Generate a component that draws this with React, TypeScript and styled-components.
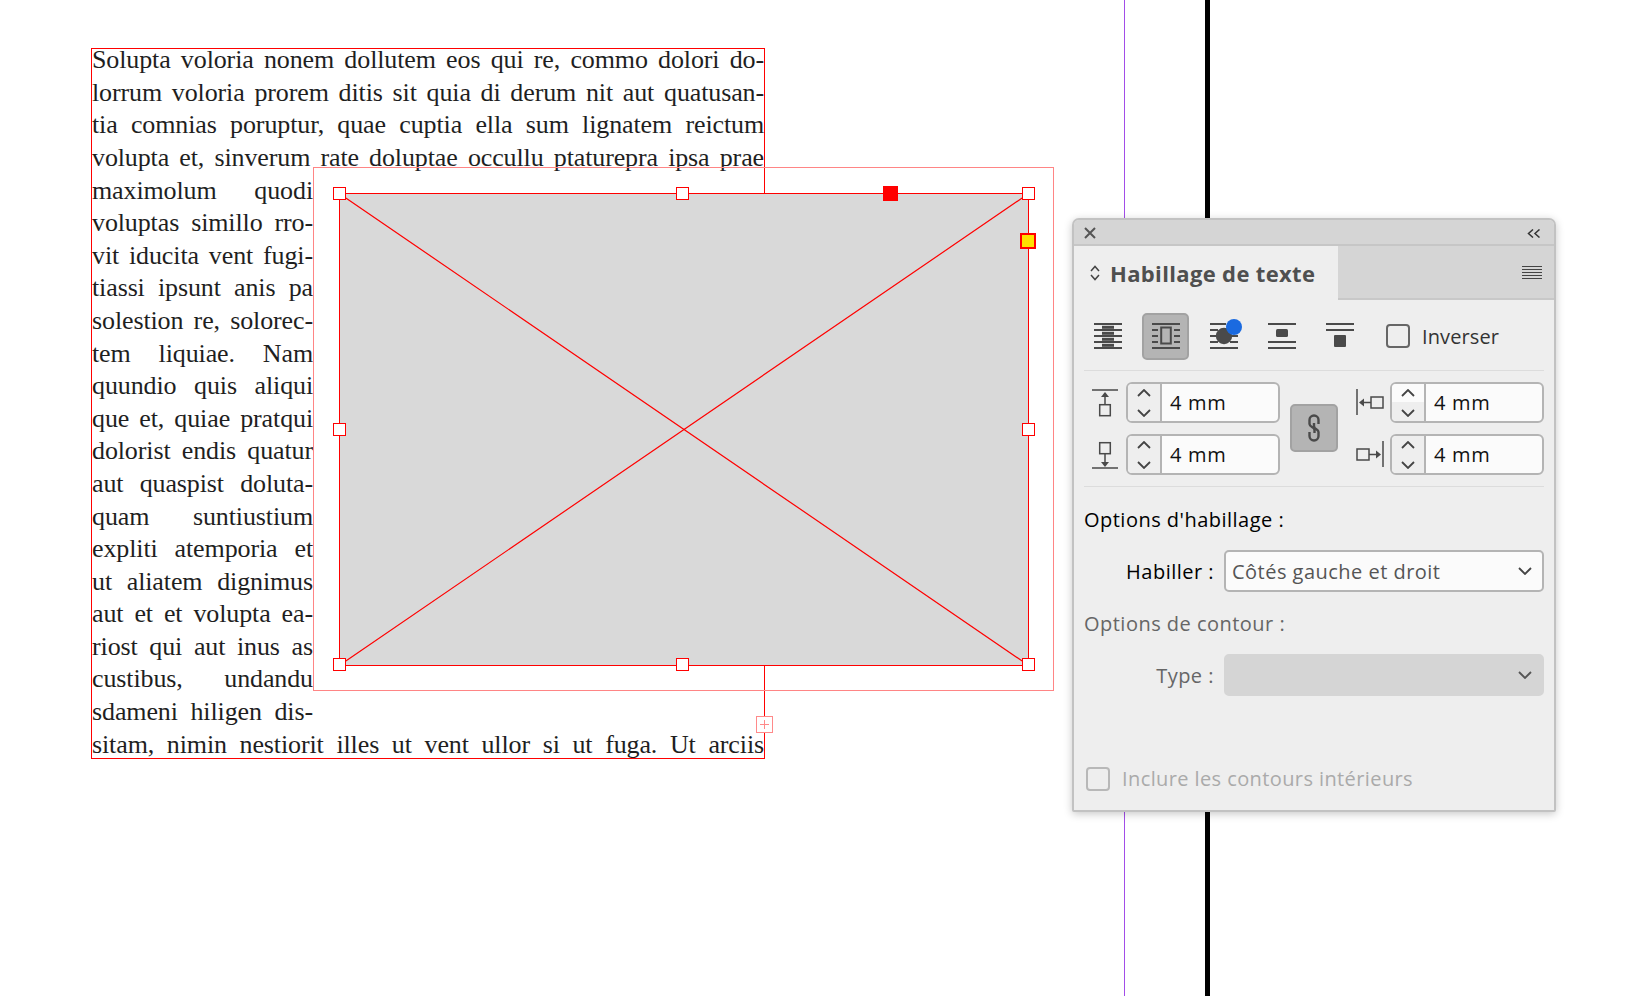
import React from 'react';
import styled, { createGlobalStyle } from 'styled-components';

const Global = createGlobalStyle`
  html, body { margin: 0; padding: 0; background: #fff; }
  #root { width: 1646px; height: 996px; overflow: hidden; }
`;

const Canvas = styled.div`
  position: relative;
  width: 1646px;
  height: 996px;
  background: #fff;
  overflow: hidden;
`;
const Guide = styled.div<{ $x: number; $w: number; $c: string }>`
  position: absolute;
  top: 0;
  bottom: 0;
  left: ${p => p.$x}px;
  width: ${p => p.$w}px;
  background: ${p => p.$c};
`;
const TextFrame = styled.div`
  position: absolute;
  left: 91px;
  top: 48px;
  width: 674px;
  height: 711px;
  box-sizing: border-box;
  border: 1px solid #ff0000;
`;
const TextFlow = styled.div`
  margin-top: -4.8px;
  font-family: 'Liberation Serif', serif;
  font-size: 26px;
  line-height: 32.6px;
  color: #1f1f1f;
  letter-spacing: -0.12px;
`;
const Line = styled.div<{ $short?: boolean }>`
  width: ${p => (p.$short ? 221 : 672)}px;
  height: 32.6px;
  text-align: justify;
  text-align-last: justify;
`;
const OutOfPort = styled.div`
  position: absolute;
  left: 756px;
  top: 716px;
  width: 17px;
  height: 17px;
  box-sizing: border-box;
  border: 1px solid #ff8a8a;
  background: #fff;
  display: flex;
  align-items: center;
  justify-content: center;
`;
const WrapBox = styled.div`
  position: absolute;
  left: 313px;
  top: 167px;
  width: 741px;
  height: 524px;
  box-sizing: border-box;
  border: 1px solid #ff8585;
`;
const ImageFrame = styled.div`
  position: absolute;
  left: 339px;
  top: 193px;
  width: 690px;
  height: 473px;
  box-sizing: border-box;
  border: 1px solid #ff0000;
  background: #d9d9d9;
`;
const Cross = styled.svg`
  display: block;
  width: 100%;
  height: 100%;
`;
const Handle = styled.div<{ $l: number; $t: number }>`
  position: absolute;
  left: ${p => p.$l}%;
  top: ${p => p.$t}%;
  width: 13px;
  height: 13px;
  margin: -7px 0 0 -7px;
  box-sizing: border-box;
  border: 1px solid #ff0000;
  background: #fff;
`;
const RedHandle = styled.div`
  position: absolute;
  left: 543px;
  top: -8px;
  width: 15px;
  height: 15px;
  background: #ff0000;
`;
const YellowHandle = styled.div`
  position: absolute;
  left: 680px;
  top: 39px;
  width: 16px;
  height: 16px;
  box-sizing: border-box;
  border: 2px solid #ff0000;
  background: #ffe100;
`;

const Panel = styled.div`
  position: absolute;
  left: 1072px;
  top: 218px;
  width: 484px;
  height: 594px;
  box-sizing: border-box;
  border: 2px solid #c2c2c2;
  border-radius: 7px 7px 2px 2px;
  background: #eeeeee;
  box-shadow: 0 2px 9px rgba(0, 0, 0, 0.22);
  font-family: 'Open Sans', sans-serif;
  font-size: 20px;
  letter-spacing: 0.48px;
  display: flex;
  flex-direction: column;
`;
const TitleBar = styled.div`
  height: 26px;
  box-sizing: border-box;
  background: #d5d5d5;
  border-bottom: 2px solid #c6c6c6;
  border-radius: 5px 5px 0 0;
  display: flex;
  align-items: center;
  justify-content: space-between;
  padding: 2px 13px 0 10px;
  flex: none;
`;
const TabRow = styled.div`
  height: 54px;
  display: flex;
  background: #d5d5d5;
  flex: none;
`;
const Tab = styled.div`
  width: 264px;
  background: #eeeeee;
  display: flex;
  align-items: center;
  padding-left: 16px;
  box-sizing: border-box;
  gap: 10px;
`;
const TabTitle = styled.span`
  font-size: 22px;
  font-weight: 700;
  color: #4f4f4f;
  letter-spacing: 0.35px;
  line-height: 30px;
`;
const TabRest = styled.div`
  flex: 1;
  border-bottom: 2px solid #c8c8c8;
  display: flex;
  align-items: center;
  justify-content: flex-end;
  padding: 0 12px 0 0;
`;
const WrapTools = styled.div`
  height: 70px;
  box-sizing: border-box;
  padding: 2px 0 0 10px;
  flex: none;
  display: flex;
  align-items: center;
  gap: 11px;
`;
const ToolButton = styled.div<{ $active?: boolean }>`
  width: 47px;
  height: 47px;
  box-sizing: border-box;
  border-radius: 5px;
  display: flex;
  align-items: center;
  justify-content: center;
  border: 2px solid ${p => (p.$active ? '#a2a2a2' : 'transparent')};
  background: ${p => (p.$active ? '#b4b4b4' : 'transparent')};
`;
const CheckRow = styled.label<{ $off?: boolean }>`
  display: flex;
  align-items: center;
  color: ${p => (p.$off ? '#aaaaaa' : '#333333')};
`;
const Box = styled.span<{ $off?: boolean }>`
  width: 24px;
  height: 24px;
  box-sizing: border-box;
  border: 2px solid ${p => (p.$off ? '#b8b8b8' : '#666666')};
  border-radius: 4px;
  margin-right: 12px;
  flex: none;
`;
const InvertWrap = styled.div`
  margin-left: 12px;
  letter-spacing: 0.1px;
`;
const Offsets = styled.div`
  flex: none;
  margin: 0 10px;
  border-top: 1px solid #dcdcdc;
  border-bottom: 1px solid #dcdcdc;
  padding: 11px 0;
  display: grid;
  grid-template-columns: 42px 154px 75px 35px 154px;
  grid-template-rows: 41px 41px;
  row-gap: 11px;
  align-items: center;
`;
const OffsetIcon = styled.svg<{ $left?: boolean }>`
  justify-self: ${p => (p.$left ? 'end' : 'start')};
  margin: ${p => (p.$left ? '0 8px 0 0' : '0 0 0 1px')};
  display: block;
`;
const Spin = styled.div`
  height: 41px;
  box-sizing: border-box;
  border: 2px solid #b4b4b4;
  border-radius: 6px;
  background: #fbfbfb;
  display: flex;
  overflow: hidden;
`;
const Stepper = styled.div<{ $hover?: boolean }>`
  width: 34px;
  flex: none;
  box-sizing: border-box;
  border-right: 2px solid #b4b4b4;
  background: ${p => (p.$hover ? 'linear-gradient(#fbfbfb 50%, #eeeeee 50%)' : '#eeeeee')};
  display: flex;
  flex-direction: column;
  align-items: center;
  justify-content: space-between;
  padding: 5px 1px 4px 0;
`;
const SpinValue = styled.span`
  padding-left: 8px;
  line-height: 37px;
  color: #111;
  font-size: 20px;
  letter-spacing: 0.7px;
`;
const LinkButton = styled.div`
  grid-column: 3;
  grid-row: 1 / span 2;
  justify-self: start;
  margin: -2px 0 0 10px;
  width: 48px;
  height: 48px;
  box-sizing: border-box;
  border: 2px solid #a2a2a2;
  border-radius: 5px;
  background: #b4b4b4;
  display: flex;
  align-items: center;
  justify-content: center;
`;
const Options = styled.div`
  flex: 1;
  display: flex;
  flex-direction: column;
  padding: 0 10px;
`;
const Heading = styled.div<{ $dim?: boolean }>`
  height: 28px;
  line-height: 28px;
  font-weight: ${p => (p.$dim ? 400 : 500)};
  color: ${p => (p.$dim ? '#666666' : '#000000')};
`;
const SelectRow = styled.div<{ $dim?: boolean }>`
  display: flex;
  align-items: center;
  justify-content: flex-end;
  gap: 10px;
  font-weight: ${p => (p.$dim ? 400 : 500)};
  color: ${p => (p.$dim ? '#666666' : '#000000')};
`;
const Select = styled.div<{ $off?: boolean }>`
  width: 320px;
  height: 42px;
  box-sizing: border-box;
  border: 2px solid ${p => (p.$off ? '#d5d5d5' : '#b4b4b4')};
  border-radius: 5px;
  background: ${p => (p.$off ? '#d5d5d5' : '#fbfbfb')};
  color: #555;
  font-weight: 400;
  display: flex;
  align-items: center;
  justify-content: space-between;
  padding: 0 10px 0 6px;
`;
const Gap = styled.div<{ $h: number }>`
  height: ${p => p.$h}px;
  flex: none;
`;
const Bottom = styled.div`
  margin-top: auto;
  padding: 0 0 18px 2px;
  letter-spacing: 0.4px;
`;

const INK = '#4a4a4a';
const Bar = ({ y, x1 = 0, x2 = 28 }: { y: number; x1?: number; x2?: number }) => (
  <line x1={x1} x2={x2} y1={y} y2={y} stroke={INK} strokeWidth="2" />
);
const ToolSvg = ({ children, overflow }: { children: React.ReactNode; overflow?: boolean }) => (
  <svg width="28" height="28" viewBox="0 0 28 28" style={overflow ? { overflow: 'visible' } : undefined}>
    {children}
  </svg>
);

const Chevron = ({ up, c = '#444' }: { up?: boolean; c?: string }) => (
  <svg width="14" height="8" viewBox="0 0 14 8">
    <path d={up ? 'M1 7 L7 1 L13 7' : 'M1 1 L7 7 L13 1'} fill="none" stroke={c} strokeWidth="1.8" />
  </svg>
);

const SpinField = ({ hover }: { hover?: boolean }) => (
  <Spin>
    <Stepper $hover={hover}>
      <Chevron up />
      <Chevron />
    </Stepper>
    <SpinValue>4 mm</SpinValue>
  </Spin>
);

const lines: [string, boolean][] = [
  ['Solupta voloria nonem dollutem eos qui re, commo dolori do-', false],
  ['lorrum voloria prorem ditis sit quia di derum nit aut quatusan-', false],
  ['tia comnias poruptur, quae cuptia ella sum lignatem reictum', false],
  ['volupta et, sinverum rate doluptae occullu ptaturepra ipsa prae', false],
  ['maximolum quodi', true],
  ['voluptas simillo rro-', true],
  ['vit iducita vent fugi-', true],
  ['tiassi ipsunt anis pa', true],
  ['solestion re, solorec-', true],
  ['tem liquiae. Nam', true],
  ['quundio quis aliqui', true],
  ['que et, quiae pratqui', true],
  ['dolorist endis quatur', true],
  ['aut quaspist doluta-', true],
  ['quam suntiustium', true],
  ['expliti atemporia et', true],
  ['ut aliatem dignimus', true],
  ['aut et et volupta ea-', true],
  ['riost qui aut inus as', true],
  ['custibus, undandu', true],
  ['sdameni hiligen dis-', true],
  ['sitam, nimin nestiorit illes ut vent ullor si ut fuga. Ut arciis', false],
];

const handles: [number, number][] = [
  [0, 0], [49.9, 0], [100.15, 0], [0, 50], [100.15, 50], [0, 100], [49.9, 100], [100.15, 100],
];

export default function App() {
  return (
    <Canvas>
      <Global />
      <Guide $x={1124} $w={1} $c="#a24de8" />
      <Guide $x={1205} $w={5} $c="#000000" />
      <TextFrame>
        <TextFlow>
          {lines.map(([t, s]) => (
            <Line key={t} $short={s}>{t}</Line>
          ))}
        </TextFlow>
      </TextFrame>
      <OutOfPort>
        <svg width="9" height="9" viewBox="0 0 9 9">
          <path d="M4.5 0V9M0 4.5H9" stroke="#ff8a8a" strokeWidth="1" />
        </svg>
      </OutOfPort>
      <WrapBox />
      <ImageFrame>
        <Cross viewBox="0 0 688 471" preserveAspectRatio="none">
          <path d="M0 0L688 471M688 0L0 471" stroke="#ff0000" strokeWidth="1.2" fill="none" />
        </Cross>
        {handles.map(([l, t]) => (
          <Handle key={`${l}-${t}`} $l={l} $t={t} />
        ))}
        <RedHandle />
        <YellowHandle />
      </ImageFrame>
      <Panel>
        <TitleBar>
          <svg width="12" height="12" viewBox="0 0 12 12">
            <path d="M1 1L11 11M11 1L1 11" stroke="#555" strokeWidth="2" />
          </svg>
          <svg width="14" height="9" viewBox="0 0 14 9">
            <path d="M6 0.5L1.5 4.5L6 8.5M12.5 0.5L8 4.5L12.5 8.5" fill="none" stroke="#333" strokeWidth="1.5" />
          </svg>
        </TitleBar>
        <TabRow>
          <Tab>
            <svg width="10" height="16" viewBox="0 0 10 16">
              <path d="M1 6L5 1.5L9 6M1 10L5 14.5L9 10" fill="none" stroke="#444" strokeWidth="1.5" />
            </svg>
            <TabTitle>Habillage de texte</TabTitle>
          </Tab>
          <TabRest>
            <svg width="20" height="15" viewBox="0 0 20 15">
              <path d="M0 1.5H20M0 4.5H20M0 7.5H20M0 10.5H20M0 13.5H20" stroke="#444" strokeWidth="1" />
            </svg>
          </TabRest>
        </TabRow>
        <WrapTools>
          <ToolButton>
            <ToolSvg>
              <Bar y={2} /><Bar y={8} /><Bar y={14} /><Bar y={20} /><Bar y={26} />
              <rect x="8" y="3.8" width="12" height="3" fill={INK} />
              <rect x="8" y="9.8" width="12" height="3" fill={INK} />
              <rect x="8" y="15.8" width="12" height="3" fill={INK} />
              <rect x="8" y="21.8" width="12" height="3" fill={INK} />
            </ToolSvg>
          </ToolButton>
          <ToolButton $active>
            <ToolSvg>
              <Bar y={2} /><Bar y={26} />
              <Bar y={8} x2={6} /><Bar y={14} x2={6} /><Bar y={20} x2={6} />
              <Bar y={8} x1={22} /><Bar y={14} x1={22} /><Bar y={20} x1={22} />
              <rect x="9.2" y="5.5" width="9.6" height="16" fill="none" stroke={INK} strokeWidth="2" />
            </ToolSvg>
          </ToolButton>
          <ToolButton>
            <ToolSvg overflow>
              <Bar y={2} x2={16} /><Bar y={8} x2={8} /><Bar y={14} x2={6} /><Bar y={20} x2={8} />
              <Bar y={14} x1={22} /><Bar y={20} x1={20} /><Bar y={26} />
              <circle cx="14" cy="14" r="8.2" fill={INK} />
              <circle cx="24" cy="5" r="8" fill="#1a6ae0" />
            </ToolSvg>
          </ToolButton>
          <ToolButton>
            <ToolSvg>
              <Bar y={2} /><Bar y={20} /><Bar y={26} />
              <rect x="8" y="7" width="12" height="8" rx="1.5" fill={INK} />
            </ToolSvg>
          </ToolButton>
          <ToolButton>
            <ToolSvg>
              <Bar y={2} /><Bar y={8} />
              <rect x="8" y="13" width="12" height="12" rx="1" fill={INK} />
            </ToolSvg>
          </ToolButton>
          <InvertWrap>
            <CheckRow>
              <Box />
              Inverser
            </CheckRow>
          </InvertWrap>
        </WrapTools>
        <Offsets>
          <OffsetIcon $left width="26" height="28" viewBox="0 0 26 28">
            <path d="M0 1H26M13 6V15" stroke={INK} strokeWidth="1.5" />
            <path d="M13 3L9 8H17Z" fill={INK} />
            <rect x="7.7" y="15.7" width="10.6" height="11" fill="none" stroke={INK} strokeWidth="1.5" />
          </OffsetIcon>
          <SpinField />
          <LinkButton>
            <svg width="12" height="28" viewBox="0 0 12 28">
              <path
                d="M10.5 10V6A4.5 4.5 0 0 0 1.5 6V10C1.5 13 6.5 13 6.5 16V19M1.5 18V22A4.5 4.5 0 0 0 10.5 22V18C10.5 15 6 15.5 6 12V9"
                fill="none"
                stroke="#4a4a4a"
                strokeWidth="2.4"
              />
            </svg>
          </LinkButton>
          <OffsetIcon width="28" height="28" viewBox="0 0 28 28">
            <path d="M1 0V26M6 13.5H15" stroke={INK} strokeWidth="1.5" />
            <path d="M3 13.5L8 9.5V17.5Z" fill={INK} />
            <rect x="15" y="8" width="12" height="11" fill="none" stroke={INK} strokeWidth="1.5" />
          </OffsetIcon>
          <SpinField hover />
          <OffsetIcon $left width="26" height="28" viewBox="0 0 26 28">
            <path d="M0 27H26M13 13V22" stroke={INK} strokeWidth="1.5" />
            <path d="M13 26L9 21H17Z" fill={INK} />
            <rect x="7.7" y="1.7" width="10.6" height="11" fill="none" stroke={INK} strokeWidth="1.5" />
          </OffsetIcon>
          <SpinField />
          <OffsetIcon width="28" height="28" viewBox="0 0 28 28">
            <path d="M27 0V26M13 13.5H22" stroke={INK} strokeWidth="1.5" />
            <path d="M25 13.5L20 9.5V17.5Z" fill={INK} />
            <rect x="1" y="8" width="12" height="11" fill="none" stroke={INK} strokeWidth="1.5" />
          </OffsetIcon>
          <SpinField />
        </Offsets>
        <Options>
          <Gap $h={19} />
          <Heading>Options d'habillage :</Heading>
          <Gap $h={16} />
          <SelectRow>
            Habiller :
            <Select>
              Côtés gauche et droit
              <Chevron />
            </Select>
          </SelectRow>
          <Gap $h={18} />
          <Heading $dim>Options de contour :</Heading>
          <Gap $h={16} />
          <SelectRow $dim>
            Type :
            <Select $off>
              <span />
              <Chevron c="#555" />
            </Select>
          </SelectRow>
          <Bottom>
            <CheckRow $off>
              <Box $off />
              Inclure les contours intérieurs
            </CheckRow>
          </Bottom>
        </Options>
      </Panel>
    </Canvas>
  );
}
